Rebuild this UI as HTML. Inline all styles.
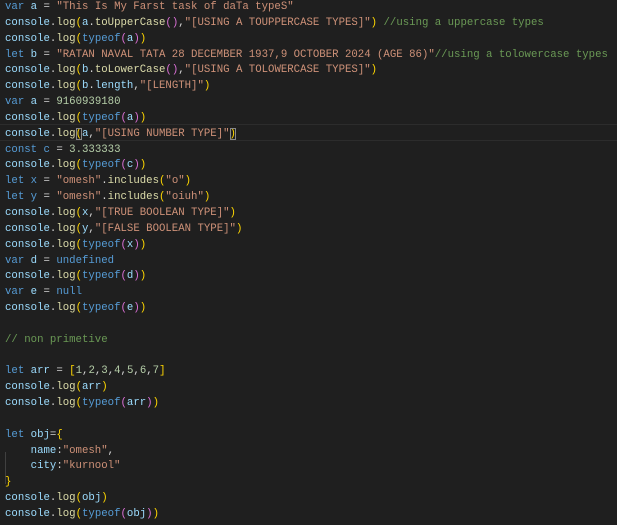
<!DOCTYPE html>
<html><head><meta charset="utf-8"><style>
html,body{margin:0;padding:0;background:#1f1f1f;width:617px;height:525px;overflow:hidden}
#c{position:absolute;left:5px;top:0px;font-family:"Liberation Mono",monospace;font-size:10.7px;line-height:15.85px;color:#d4d4d4;white-space:pre}
.k{color:#569cd6}.v{color:#9cdcfe}.f{color:#dcdcaa}.s{color:#ce9178}.n{color:#b5cea8}.c{color:#6a9955}
.b1{color:#ffd700}.b2{color:#da70d6}.b3{color:#179fff}
.hl{position:absolute;left:0;width:617px;top:124px;height:15px;border-top:1px solid #2c2c2c;border-bottom:1px solid #2c2c2c}
.bx{outline:1px solid #888;outline-offset:-1px}
.g{position:absolute;left:5px;width:1px;background:#404040;top:452px;height:32px}
</style></head><body>
<div class="hl"></div>
<div class="g"></div>
<div id="c"><span class="k">var</span> <span class="v">a</span> = <span class="s">"This Is My Farst task of daTa typeS"</span>
<span class="v">console</span>.<span class="f">log</span><span class="b1">(</span><span class="v">a</span>.<span class="f">toUpperCase</span><span class="b2">()</span>,<span class="s">"[USING A TOUPPERCASE TYPES]"</span><span class="b1">)</span> <span class="c">//using a uppercase types</span>
<span class="v">console</span>.<span class="f">log</span><span class="b1">(</span><span class="k">typeof</span><span class="b2">(</span><span class="v">a</span><span class="b2">)</span><span class="b1">)</span>
<span class="k">let</span> <span class="v">b</span> = <span class="s">"RATAN NAVAL TATA 28 DECEMBER 1937,9 OCTOBER 2024 (AGE 86)"</span><span class="c">//using a tolowercase types</span>
<span class="v">console</span>.<span class="f">log</span><span class="b1">(</span><span class="v">b</span>.<span class="f">toLowerCase</span><span class="b2">()</span>,<span class="s">"[USING A TOLOWERCASE TYPES]"</span><span class="b1">)</span>
<span class="v">console</span>.<span class="f">log</span><span class="b1">(</span><span class="v">b</span>.<span class="v">length</span>,<span class="s">"[LENGTH]"</span><span class="b1">)</span>
<span class="k">var</span> <span class="v">a</span> = <span class="n">9160939180</span>
<span class="v">console</span>.<span class="f">log</span><span class="b1">(</span><span class="k">typeof</span><span class="b2">(</span><span class="v">a</span><span class="b2">)</span><span class="b1">)</span>
<span class="v">console</span>.<span class="f">log</span><span class="b1 bx">(</span><span class="v">a</span>,<span class="s">"[USING NUMBER TYPE]"</span><span class="b1 bx">)</span>
<span class="k">const</span> <span class="k">c</span> = <span class="n">3.333333</span>
<span class="v">console</span>.<span class="f">log</span><span class="b1">(</span><span class="k">typeof</span><span class="b2">(</span><span class="v">c</span><span class="b2">)</span><span class="b1">)</span>
<span class="k">let</span> <span class="k">x</span> = <span class="s">"omesh"</span>.<span class="f">includes</span><span class="b1">(</span><span class="s">"o"</span><span class="b1">)</span>
<span class="k">let</span> <span class="k">y</span> = <span class="s">"omesh"</span>.<span class="f">includes</span><span class="b1">(</span><span class="s">"oiuh"</span><span class="b1">)</span>
<span class="v">console</span>.<span class="f">log</span><span class="b1">(</span><span class="v">x</span>,<span class="s">"[TRUE BOOLEAN TYPE]"</span><span class="b1">)</span>
<span class="v">console</span>.<span class="f">log</span><span class="b1">(</span><span class="v">y</span>,<span class="s">"[FALSE BOOLEAN TYPE]"</span><span class="b1">)</span>
<span class="v">console</span>.<span class="f">log</span><span class="b1">(</span><span class="k">typeof</span><span class="b2">(</span><span class="v">x</span><span class="b2">)</span><span class="b1">)</span>
<span class="k">var</span> <span class="v">d</span> = <span class="k">undefined</span>
<span class="v">console</span>.<span class="f">log</span><span class="b1">(</span><span class="k">typeof</span><span class="b2">(</span><span class="v">d</span><span class="b2">)</span><span class="b1">)</span>
<span class="k">var</span> <span class="v">e</span> = <span class="k">null</span>
<span class="v">console</span>.<span class="f">log</span><span class="b1">(</span><span class="k">typeof</span><span class="b2">(</span><span class="v">e</span><span class="b2">)</span><span class="b1">)</span>

<span class="c">// non primetive</span>

<span class="k">let</span> <span class="v">arr</span> = <span class="b1">[</span><span class="n">1</span>,<span class="n">2</span>,<span class="n">3</span>,<span class="n">4</span>,<span class="n">5</span>,<span class="n">6</span>,<span class="n">7</span><span class="b1">]</span>
<span class="v">console</span>.<span class="f">log</span><span class="b1">(</span><span class="v">arr</span><span class="b1">)</span>
<span class="v">console</span>.<span class="f">log</span><span class="b1">(</span><span class="k">typeof</span><span class="b2">(</span><span class="v">arr</span><span class="b2">)</span><span class="b1">)</span>

<span class="k">let</span> <span class="v">obj</span>=<span class="b1">{</span>
    <span class="v">name</span>:<span class="s">"omesh"</span>,
    <span class="v">city</span>:<span class="s">"kurnool"</span>
<span class="b1">}</span>
<span class="v">console</span>.<span class="f">log</span><span class="b1">(</span><span class="v">obj</span><span class="b1">)</span>
<span class="v">console</span>.<span class="f">log</span><span class="b1">(</span><span class="k">typeof</span><span class="b2">(</span><span class="v">obj</span><span class="b2">)</span><span class="b1">)</span></div>
</body></html>
